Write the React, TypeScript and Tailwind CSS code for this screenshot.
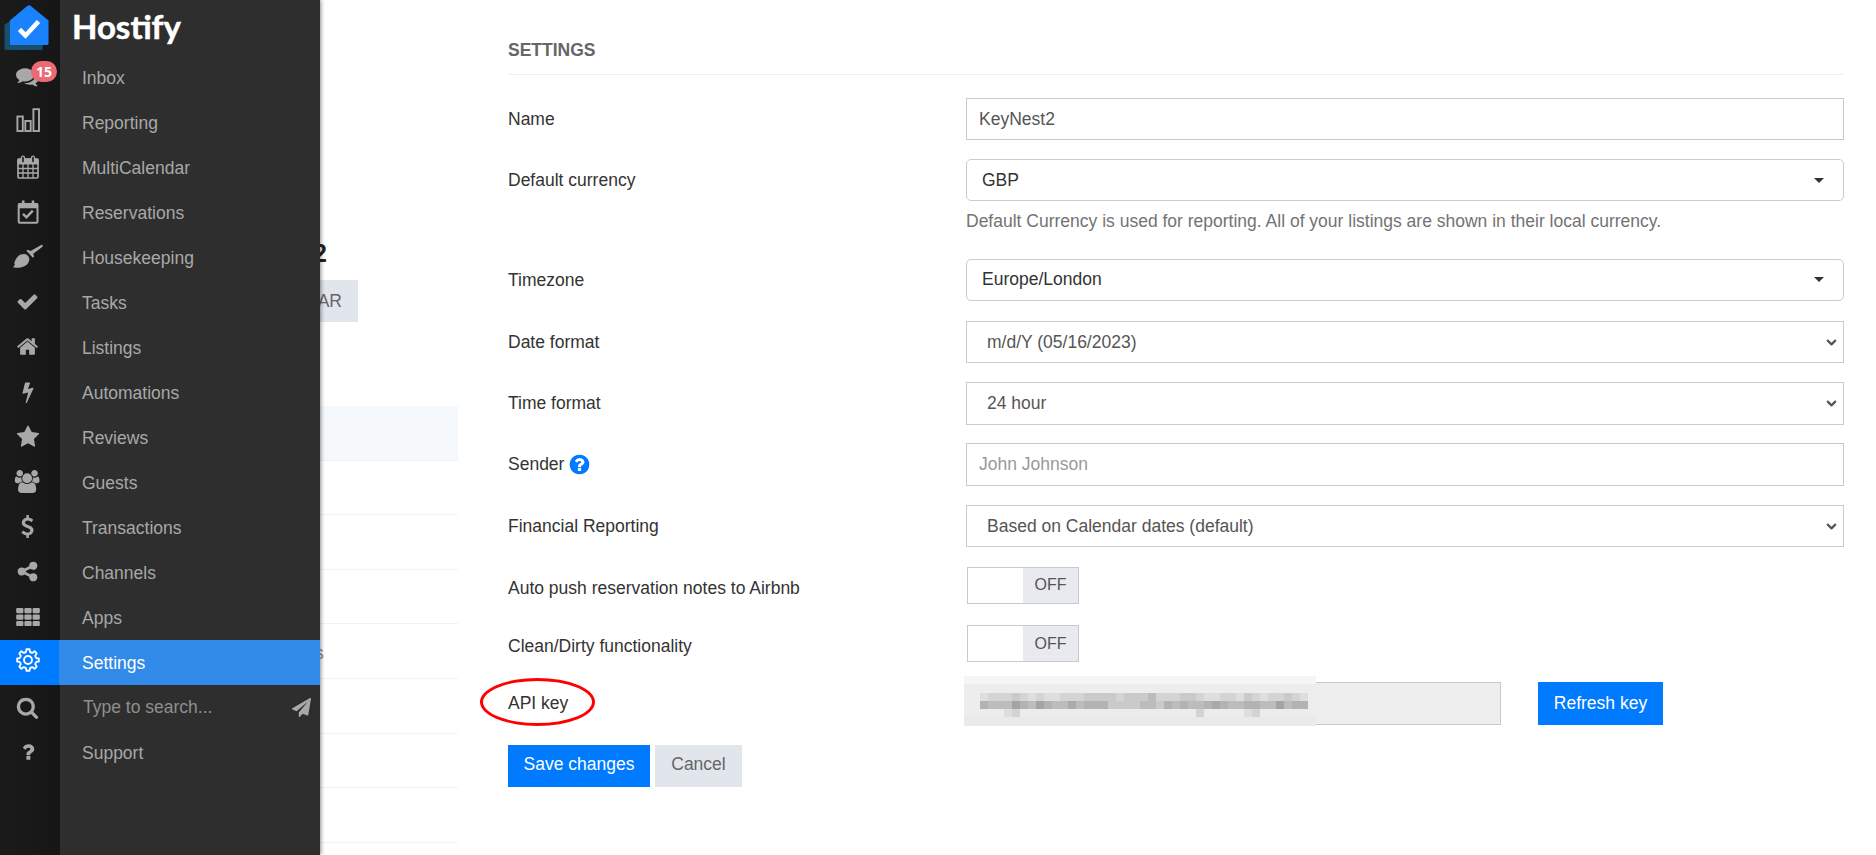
import { useState } from 'react';
import type { ReactNode } from 'react';
import { ChevronDown } from 'lucide-react';

const paths = {
  comments: 'M1408 768q0 139-94 257t-256.5 186.5-353.5 68.5q-86 0-176-16-124 88-278 128-36 9-86 16h-3q-11 0-20.5-8t-11.5-21q-1-3-1-6.5t.5-6.5 2-6l2.5-5 3.5-5.5 4-5 4.5-5 4-4.5q5-6 23-25t26-29.5 22.5-29 25-38.5 20.5-44q-124-72-195-177t-71-224q0-139 94-257t256.5-186.5 353.5-68.5 353.5 68.5 256.5 186.5 94 257zm384 256q0 120-71 224.5t-195 176.5q10 24 20.5 44t25 38.5 22.5 29 26 29.5 23 25q1 1 4 4.5t4.5 5 4 5 3.5 5.5l2.5 5 2 6 .5 6.5-1 6.5q-3 14-13 22t-22 7q-50-7-86-16-154-40-278-128-90 16-176 16-271 0-472-132 58 4 88 4 161 0 309-45t264-129q125-92 192-212t67-254q0-77-23-152 129 71 204 178t75 230z',
  check: 'M1671 566q0 40-28 68l-724 724-136 136q-28 28-68 28t-68-28l-136-136-362-362q-28-28-28-68t28-68l136-136q28-28 68-28t68 28l294 295 656-657q28-28 68-28t68 28l136 136q28 28 28 68z',
  home: 'M1472 992v480q0 26-19 45t-45 19h-384v-384h-256v384h-384q-26 0-45-19t-19-45v-480q0-1 .5-3t.5-3l575-474 575 474q1 2 1 6zm223-69l-62 74q-8 9-21 11h-3q-13 0-21-7l-692-577-692 577q-12 8-24 7-13-2-21-11l-62-74q-8-10-7-23.5t11-21.5l719-599q32-26 76-26t76 26l244 204v-195q0-14 9-23t23-9h192q14 0 23 9t9 23v408l219 182q10 8 11 21.5t-7 23.5z',
  bolt: 'M1333 566q18 20 7 44l-540 1157q-13 25-42 25-4 0-14-2-17-5-25.5-19t-4.5-30l197-808-406 101q-4 1-12 1-18 0-31-11-18-15-13-39l201-825q4-14 16-23t28-9h328q19 0 32 12.5t13 29.5q0 8-5 18l-171 463 396-98q8-2 12-2 19 0 34 15z',
  star: 'M1728 647q0 22-26 48l-363 354 86 500q1 7 1 20 0 21-10.5 35.5t-30.5 14.5q-19 0-40-12l-449-236-449 236q-22 12-40 12-21 0-31.5-14.5t-10.5-35.5q0-6 2-20l86-500-364-354q-25-27-25-48 0-37 56-46l502-73 225-455q19-41 49-41t49 41l225 455 502 73q56 9 56 46z',
  group: 'M657 896q-162 5-265 128h-134q-82 0-138-40.5t-56-118.5q0-353 124-353 6 0 43.5 21t97.5 42.5 119 21.5q67 0 133-23-5 37-5 66 0 139 81 256zm1071 637q0 120-73 189.5t-194 69.5h-874q-121 0-194-69.5t-73-189.5q0-53 3.5-103.5t14-109 26.5-108.5 43-97.5 62-81 85.5-53.5 111.5-20q10 0 43 21.5t73 48 107 48 135 21.5 135-21.5 107-48 73-48 43-21.5q61 0 111.5 20t85.5 53.5 62 81 43 97.5 26.5 108.5 14 109 3.5 103.5zm-1024-1277q0 106-75 181t-181 75-181-75-75-181 75-181 181-75 181 75 75 181zm704 384q0 159-112.5 271.5t-271.5 112.5-271.5-112.5-112.5-271.5 112.5-271.5 271.5-112.5 271.5 112.5 112.5 271.5zm576 225q0 78-56 118.5t-138 40.5h-134q-103-123-265-128 81-117 81-256 0-29-5-66 66 23 133 23 59 0 119-21.5t97.5-42.5 43.5-21q124 0 124 353zm-128-609q0 106-75 181t-181 75-181-75-75-181 75-181 181-75 181 75 75 181z',
  dollar: 'M1362 1185q0 153-99.5 263.5t-258.5 136.5v175q0 14-9 23t-23 9h-135q-13 0-22.5-9.5t-9.5-22.5v-175q-66-9-127.5-31t-101.5-44.5-74-48-46.5-37.5-17.5-18q-17-21-2-41l103-135q7-10 23-12 15-2 24 9l2 2q113 99 243 125 37 8 74 8 81 0 142.5-43t61.5-122q0-28-15-53t-33.5-42-58.5-37.5-66-32-80-32.5q-39-16-61.5-25t-61.5-26.5-62.5-31-56.5-35.5-53.5-42.5-43.5-49-35.5-58-21-66.5-8.5-78q0-138 98-242t255-134v-180q0-13 9.5-22.5t22.5-9.5h135q14 0 23 9t9 23v176q57 6 110.5 23t87 33.5 63.5 37.5 39 29 15 14q17 18 5 38l-81 146q-8 15-23 16-14 3-27-7-3-3-14.5-12t-39-26.5-58.5-32-74.5-26-85.5-11.5q-95 0-155 43t-60 111q0 26 8.5 48t29.5 41.5 39.5 33 56 31 60.5 27 70 27.5q53 20 81 31.5t76 35 75.5 42.5 62 50 53 63.5 31.5 76.5 13 94z',
  share: 'M1344 1024q133 0 226.5 93.5t93.5 226.5-93.5 226.5-226.5 93.5-226.5-93.5-93.5-226.5q0-12 2-34l-360-180q-92 86-218 86-133 0-226.5-93.5t-93.5-226.5 93.5-226.5 226.5-93.5q126 0 218 86l360-180q-2-22-2-34 0-133 93.5-226.5t226.5-93.5 226.5 93.5 93.5 226.5-93.5 226.5-226.5 93.5q-126 0-218-86l-360 180q2 22 2 34t-2 34l360 180q92-86 218-86z',
  search: 'M1216 832q0-185-131.5-316.5t-316.5-131.5-316.5 131.5-131.5 316.5 131.5 316.5 316.5 131.5 316.5-131.5 131.5-316.5zm512 832q0 52-38 90t-90 38q-54 0-90-38l-343-342q-179 124-399 124-143 0-273.5-55.5t-225-150-150-225-55.5-273.5 55.5-273.5 150-225 225-150 273.5-55.5 273.5 55.5 225 150 150 225 55.5 273.5q0 220-124 399l343 343q37 37 37 90z',
  question: 'M1088 1256v240q0 16-12 28t-28 12h-240q-16 0-28-12t-12-28v-240q0-16 12-28t28-12h240q16 0 28 12t12 28zm316-600q0 54-15.5 101t-35 76.5-55 59.5-57.5 43.5-61 35.5q-41 23-68.5 65t-27.5 67q0 17-12 32.5t-28 15.5h-240q-15 0-25.5-18.5t-10.5-37.5v-45q0-83 65-156.5t143-108.5q59-27 84-56t25-76q0-42-46.5-74t-107.5-32q-65 0-108 29-35 25-107 115-13 16-31 16-12 0-25-8l-164-125q-13-10-15.5-25t5.5-28q160-266 464-266 80 0 161 31t146 83 106 127.5 41 158.5z',
  questionCircle: 'M1024 1376v-192q0-14-9-23t-23-9h-192q-14 0-23 9t-9 23v192q0 14 9 23t23 9h192q14 0 23-9t9-23zm256-672q0-88-55.5-163t-138.5-116-170-41q-243 0-371 213-15 24 8 42l132 100q7 6 19 6 16 0 25-12 53-68 86-92 34-24 86-24 48 0 85.5 26t37.5 59q0 38-20 61t-68 45q-63 28-115.5 86.5t-52.5 125.5v36q0 14 9 23t23 9h192q14 0 23-9t9-23q0-19 21.5-49.5t54.5-49.5q32-18 49-28.5t46-35 44.5-48 28-60.5 12.5-81zm384 192q0 209-103 385.5t-279.5 279.5-385.5 103-385.5-103-279.5-279.5-103-385.5 103-385.5 279.5-279.5 385.5-103 385.5 103 279.5 279.5 103 385.5z',
  plane: 'M1764 11q33 24 27 64l-256 1536q-5 29-32 45-14 8-31 8-11 0-24-5l-453-185-242 295q-18 23-49 23-13 0-22-4-19-7-30.5-23.5t-11.5-36.5v-349l864-1059-1069 925-395-162q-37-14-40-55-2-40 32-59l1664-960q15-9 32-9 20 0 36 11z',
};

function Glyph({ d, size = 23, wide = false, className = '' }: { d: string; size?: number; wide?: boolean; className?: string }) {
  return (
    <svg
      width={wide ? (size * 2048) / 1792 : size}
      height={size}
      viewBox={wide ? '0 0 2048 1792' : '0 0 1792 1792'}
      fill="currentColor"
      className={`shrink-0 ${className}`}
    >
      <path d={d} />
    </svg>
  );
}

function BarsIcon() {
  return (
    <svg width="24" height="24" viewBox="0 0 24 24" fill="none" stroke="currentColor" strokeWidth="1.9" className="mb-[3px]">
      <rect x="1.4" y="8.5" width="5.4" height="14.5" />
      <rect x="9.3" y="13" width="5.4" height="10" />
      <rect x="17.4" y="1.2" width="5.6" height="21.8" />
    </svg>
  );
}

function CalendarIcon() {
  return (
    <svg width="24" height="24" viewBox="0 0 24 24" fill="none" stroke="currentColor">
      <path d="M2 4h20V9H2z" fill="currentColor" />
      <rect x="2" y="4" width="20" height="19" rx="1.2" strokeWidth="1.7" />
      <path d="M7 9v14M12 9v14M17 9v14M2 13.5h20M2 18h20" strokeWidth="1.3" />
      <path d="M7 2.500v4M17 2.500v4" strokeWidth="4.2" strokeLinecap="round" />
      <path d="M7 2.500v4M17 2.500v4" stroke="#181818" strokeWidth="1.6" strokeLinecap="round" />
    </svg>
  );
}

function CalendarCheckIcon() {
  return (
    <svg width="24" height="24" viewBox="0 0 24 24" fill="none" stroke="currentColor">
      <rect x="2.700" y="4" width="18.800" height="18.800" rx="1" strokeWidth="2" />
      <path d="M2 3.500h20v4.800H2z" fill="currentColor" stroke="none" />
      <path d="M7.200 0.500v4M17 0.500v4" strokeWidth="2.600" />
      <path d="M7 13.800l3.500 3.500 6.300-6.600" strokeWidth="2.500" />
    </svg>
  );
}

function BroomIcon() {
  return (
    <svg width="30" height="25" viewBox="0 0 30 25" fill="currentColor" className="shrink-0">
      <path d="M28.200 0.900q1.200-.4 1.600.6.200.8-.6 1.400L20.200 9.800l.9 2.600-1.300 1.300-6.400-7 1.500-1 2.700 1.400z" />
      <path d="M11.400 10c2.600 0.200 5 2.800 5 5.400-1 5.800-5.600 9-16.400 8.200 1.200-1.200 1.800-2.600 2-4l-1 .2c1.400-4.400 3.600-10 10.400-9.800z" />
    </svg>
  );
}

function GridIcon() {
  return (
    <svg width="24" height="18" viewBox="0 0 24 18" fill="currentColor">
      {[0, 6.5, 13].map((y) => [0.2, 8.4, 16.6].map((x) => <rect key={`${x}-${y}`} x={x} y={y} width="7.2" height="5.2" rx="1.2" />))}
    </svg>
  );
}

// Outline cog with eight teeth
const gearPath = Array.from({ length: 8 }, (_, i) => {
  const at = (deg: number, r: number) => {
    const a = ((i * 45 + deg - 90) * Math.PI) / 180;
    return `${(12 + r * Math.cos(a)).toFixed(2)} ${(12 + r * Math.sin(a)).toFixed(2)}`;
  };
  return `${i === 0 ? 'M' : 'L'}${at(-13, 8.6)}L${at(-8, 10.9)}L${at(8, 10.9)}L${at(13, 8.6)}Q${at(22.5, 7.6)} ${at(32, 8.6)}`;
}).join('') + 'Z';

function GearIcon() {
  return (
    <svg width="24" height="24" viewBox="0 0 24 24" fill="none" stroke="currentColor" strokeWidth="1.9" strokeLinejoin="round" className="mb-[3px]">
      <path d={gearPath} />
      <circle cx="12" cy="12" r="4" />
    </svg>
  );
}

const menuItems: { label: string; icon: ReactNode; badge?: string }[] = [
  { label: 'Inbox', icon: <Glyph d={paths.comments} />, badge: '15' },
  { label: 'Reporting', icon: <BarsIcon /> },
  { label: 'MultiCalendar', icon: <CalendarIcon /> },
  { label: 'Reservations', icon: <CalendarCheckIcon /> },
  { label: 'Housekeeping', icon: <BroomIcon /> },
  { label: 'Tasks', icon: <Glyph d={paths.check} /> },
  { label: 'Listings', icon: <Glyph d={paths.home} /> },
  { label: 'Automations', icon: <Glyph d={paths.bolt} size={22} /> },
  { label: 'Reviews', icon: <Glyph d={paths.star} size={24} /> },
  { label: 'Guests', icon: <Glyph d={paths.group} wide /> },
  { label: 'Transactions', icon: <Glyph d={paths.dollar} /> },
  { label: 'Channels', icon: <Glyph d={paths.share} /> },
  { label: 'Apps', icon: <GridIcon /> },
  { label: 'Settings', icon: <GearIcon /> },
];

function Logo() {
  return (
    <svg width="46" height="47" viewBox="0 0 46 47">
      <path d="M0.500 21L20 6l18.500 15v23.500a1.500 1.500 0 0 1-1.500 1.500H2a1.500 1.500 0 0 1-1.500-1.500z" fill="#17506f" />
      <path d="M6 16.500L23.500 1.800q1.500-1 3 0L44.500 16.500V39.500a1.500 1.500 0 0 1-1.500 1.500H7.500A1.500 1.500 0 0 1 6 39.500z" fill="#1a82ff" />
      <path d="M15.500 25.500l6 6L34.500 17.500" fill="none" stroke="#fff" strokeWidth="4.600" />
    </svg>
  );
}

function Sidebar() {
  const [active, setActive] = useState('Settings');

  return (
    <nav className="relative z-10 w-[320px] shrink-0 bg-[linear-gradient(90deg,#1b1b1b_0,#161616_60px,#2e2e2e_60px)] text-[#a8a8a8] shadow-[1px_0_4px_rgba(0,0,0,0.45)]">
      <div className="flex h-[55px] items-start pt-1">
        <div className="w-[60px] pl-1">
          <Logo />
        </div>
        <span className="pl-3 font-['Lato'] text-[33px] leading-[45px] font-bold text-white [-webkit-text-stroke:0.5px_white]">Hostify</span>
      </div>

      {menuItems.map((item) => (
        <a
          key={item.label}
          onClick={() => setActive(item.label)}
          className={`flex h-[45px] cursor-pointer ${item.label === active ? 'bg-[#328ae8] text-white' : ''}`}
        >
          <span className={`relative flex w-[59px] items-center justify-center pr-1 pb-0.5 ${item.label === active ? 'bg-[#007bff]' : ''}`}>
            {item.icon}
            {item.badge && (
              <span className="absolute top-[6px] left-[31px] flex h-[21px] w-[26px] items-center justify-center rounded-full bg-[#ed6a75] font-['Open_Sans'] text-[14px] font-bold text-white">
                {item.badge}
              </span>
            )}
          </span>
          <span className="pl-[23px] leading-[46px]">{item.label}</span>
        </a>
      ))}

      <div className="flex h-[45px] items-center">
        <span className="flex w-[59px] justify-center pr-1">
          <Glyph d={paths.search} />
        </span>
        <input
          placeholder="Type to search..."
          className="ml-6 w-[180px] bg-transparent outline-none placeholder:text-[#8e8e8e]"
        />
        <Glyph d={paths.plane} size={19} className="ml-[29px]" />
      </div>
      <a className="flex h-[45px] cursor-pointer items-center">
        <span className="flex w-[59px] justify-center pr-1 pb-px">
          <Glyph d={paths.question} size={22} />
        </span>
        <span className="pt-0.5 pl-[23px]">Support</span>
      </a>
    </nav>
  );
}

// Column of the page that the expanded menu overlaps
function AccountColumn() {
  return (
    <div className="w-[138px] shrink-0 pt-[237px]">
      <div className="-ml-[7px] text-[25px] leading-8 font-bold text-[#222]">2</div>
      <div className="mt-[11px] flex h-[42px] w-[38px] items-center justify-end bg-[#e1e5ec] pr-4 text-[#666]">AR</div>
      <div className="mt-[84px] h-[55px] border-b border-[#f0f2f5] bg-[#f5f9fc]" />
      <div className="h-[54px] border-b border-[#f0f2f5]" />
      <div className="h-[55px] border-b border-[#f0f2f5]" />
      <div className="h-[54px] border-b border-[#f0f2f5]" />
      <div className="h-[55px] border-b border-[#f0f2f5] text-[#7c8ca5] leading-[58px]">
        <span className="-ml-[5px]">s</span>
      </div>
      <div className="h-[55px] border-b border-[#f0f2f5]" />
      <div className="h-[54px] border-b border-[#f0f2f5]" />
      <div className="h-[55px] border-b border-[#f0f2f5]" />
    </div>
  );
}

function Row({ label, className = '', children }: { label: ReactNode; className?: string; children: ReactNode }) {
  return (
    <div className={`flex ${className}`}>
      <label className="flex h-[42px] w-[458px] shrink-0 items-center text-[#333]">{label}</label>
      <div className="min-w-0 flex-1">{children}</div>
    </div>
  );
}

function Picker({ value, className = '' }: { value: string; className?: string }) {
  return (
    <button className={`flex h-[42px] w-full items-center justify-between rounded-[5px] border border-[#ccc] pr-[19px] pl-[15px] text-[#333] ${className}`}>
      {value}
      <span className="border-x-[5px] border-t-[5px] border-x-transparent border-t-[#333]" />
    </button>
  );
}

function Select({ value, className = 'h-[42px]' }: { value: string; className?: string }) {
  return (
    <div className={`flex items-center justify-between border border-[#c9cbd0] pr-[4px] pl-5 text-[#555] ${className}`}>
      {value}
      <ChevronDown size={15} strokeWidth={3.4} />
    </div>
  );
}

function Toggle({ className = '' }: { className?: string }) {
  const [on, setOn] = useState(false);

  return (
    <button onClick={() => setOn(!on)} className="ml-px flex h-[37px] w-[112px] border border-[#c2cad8]">
      <span className="h-full w-1/2 bg-white" />
      <span className={`flex h-full w-1/2 items-center justify-center bg-[#e9eaf0] text-base text-[#555] ${className}`}>
        {on ? 'ON' : 'OFF'}
      </span>
    </button>
  );
}

// Shades of the obscured key, one value per block
const maskRows = [
  'edddcdedeedddccccdcccbdddccdeeddecdeddcde',
  'abbb8ab8abb9baaaccccbbcababba9abbaabb8baac'.slice(0, 41),
  '000ed0000000000000000000000d00000ed000000',
];
const shades: Record<string, string> = {
  '0': '#ececec', '8': '#a4a4a6', '9': '#aaaaaa', a: '#b3b3b5', b: '#bdbcbb', c: '#cacacb', d: '#d4d4d4', e: '#dedede',
};

function MaskedKey() {
  return (
    <div className="flex h-[43px] w-[535px] border border-[#c2cad8] bg-[#eee]">
      <div className="-mt-[7px] -ml-[3px] h-[50px] w-[352px] border-t-8 border-b-[9px] border-t-[#f5f5f6] border-b-[#e9eaec] bg-[#ededed] pt-[9px] pl-4">
        {maskRows.map((row, i) => (
          <div key={i} className="flex h-2">
            {row.split('').map((c, j) => (
              <span key={j} className="h-2 w-2" style={{ background: shades[c] }} />
            ))}
          </div>
        ))}
      </div>
    </div>
  );
}

export default function App() {
  return (
    <div className="flex h-[855px] overflow-hidden bg-white font-['Liberation_Sans',Arial,sans-serif] text-[17.5px] leading-[25px]">
      <Sidebar />
      <AccountColumn />

      <main className="ml-[50px] w-[1336px] pt-[37px]">
        <h2 className="h-[38px] border-b border-[#eee] pt-px font-bold text-[#666]">SETTINGS</h2>

        <Row label="Name" className="mt-[23px]">
          <input defaultValue="KeyNest2" className="h-[42px] w-full border border-[#c2cad8] px-3 text-[#555] outline-none" />
        </Row>
        <Row label="Default currency" className="mt-[19px]">
          <Picker value="GBP" />
          <p className="mt-[8px] text-[#737373]">
            Default Currency is used for reporting. All of your listings are shown in their local currency.
          </p>
        </Row>
        <Row label="Timezone" className="mt-[25px]">
          <Picker value="Europe/London" className="pb-0.5" />
        </Row>
        <Row label="Date format" className="mt-5">
          <Select value="m/d/Y (05/16/2023)" />
        </Row>
        <Row label="Time format" className="mt-[19px]">
          <Select value="24 hour" className="h-[43px]" />
        </Row>
        <Row
          label={
            <>
              Sender <Glyph d={paths.questionCircle} size={23} className="ml-1 text-[#007bff]" />
            </>
          }
          className="mt-[18px]"
        >
          <input placeholder="John Johnson" className="h-[43px] w-full border border-[#c2cad8] px-3 outline-none placeholder:text-[#999]" />
        </Row>
        <Row label="Financial Reporting" className="mt-[19px]">
          <Select value="Based on Calendar dates (default)" />
        </Row>
        <Row label="Auto push reservation notes to Airbnb" className="mt-[20px]">
          <Toggle className="pb-0.5" />
        </Row>
        <Row label="Clean/Dirty functionality" className="mt-[16px]">
          <Toggle />
        </Row>
        <Row
          label={
            <span className="relative">
              API key
              <span className="absolute -top-[13px] -left-[28px] h-[48px] w-[115px] rounded-[50%] border-3 border-[#f00]" />
            </span>
          }
          className="mt-[15px]"
        >
          <div className="flex">
            <MaskedKey />
            <button className="ml-[37px] h-[43px] w-[125px] bg-[#007bff] pb-px text-white">Refresh key</button>
          </div>
        </Row>

        <div className="mt-5 flex gap-[5px]">
          <button className="h-[42px] w-[142px] bg-[#007bff] pb-[3px] text-white">Save changes</button>
          <button className="h-[42px] w-[87px] bg-[#e1e5ec] pb-[3px] text-[#666]">Cancel</button>
        </div>
      </main>
    </div>
  );
}
